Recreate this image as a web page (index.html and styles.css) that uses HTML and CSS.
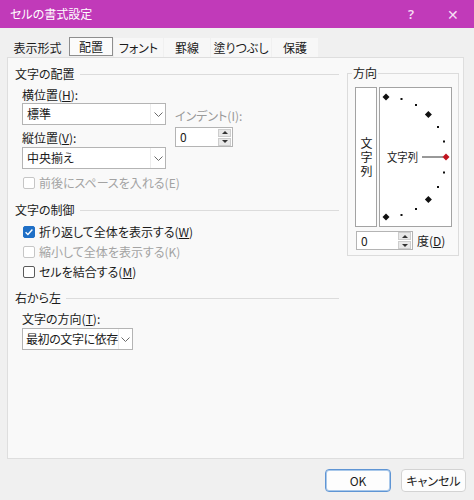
FILE: index.html
```html
<!DOCTYPE html>
<html lang="ja">
<head>
<meta charset="utf-8">
<title>セルの書式設定</title>
<link rel="stylesheet" href="styles.css">
</head>
<body>
<div class="window">
  <div class="titlebar">
    <span class="title">セルの書式設定</span>
    <span class="tb-btn">?</span>
    <span class="tb-btn tb-close">✕</span>
  </div>

  <div class="tabs">
    <div class="tab tab-plain">表示形式</div>
    <div class="tab tab-active">配置</div>
    <div class="tab">フォント</div>
    <div class="tab">罫線</div>
    <div class="tab">塗りつぶし</div>
    <div class="tab">保護</div>
  </div>

  <div class="panel">
    <div class="left">
      <div class="group-title"><span>文字の配置</span><i class="rule"></i></div>
      <div class="form form-align">
        <div class="col-a">
          <div class="label">横位置(<u>H</u>):</div>
          <div class="combo combo-wide">
            <span class="combo-text">標準</span>
            <span class="combo-arrow"><svg width="9" height="5" viewBox="0 0 9 5"><polyline points="0.5,0.5 4.5,4.5 8.5,0.5" fill="none" stroke="#6a6a6a" stroke-width="1"/></svg></span>
          </div>
          <div class="label label-2">縦位置(<u>V</u>):</div>
          <div class="combo combo-wide">
            <span class="combo-text">中央揃え</span>
            <span class="combo-arrow"><svg width="9" height="5" viewBox="0 0 9 5"><polyline points="0.5,0.5 4.5,4.5 8.5,0.5" fill="none" stroke="#6a6a6a" stroke-width="1"/></svg></span>
          </div>
        </div>
        <div class="col-b">
          <div class="label label-disabled">インデント(I):</div>
          <div class="spin spin-indent">
            <span class="spin-text">0</span>
            <span class="spin-btns">
              <span class="spin-up"><i class="tri-up"></i></span>
              <span class="spin-down"><i class="tri-down"></i></span>
            </span>
          </div>
        </div>
      </div>
      <div class="form">
        <div class="check-row check-first disabled"><span class="cb cb-disabled"></span><span>前後にスペースを入れる(E)</span></div>
      </div>

      <div class="group-title group-2"><span>文字の制御</span><i class="rule"></i></div>
      <div class="form form-checks">
        <div class="check-row"><span class="cb cb-checked"><svg width="12" height="12" viewBox="0 0 12 12"><polyline points="2.6,6.2 4.9,8.4 9.4,3.6" fill="none" stroke="#fff" stroke-width="1.4"/></svg></span><span>折り返して全体を表示する(<u>W</u>)</span></div>
        <div class="check-row disabled"><span class="cb cb-disabled"></span><span>縮小して全体を表示する(K)</span></div>
        <div class="check-row"><span class="cb"></span><span>セルを結合する(<u>M</u>)</span></div>
      </div>

      <div class="group-title group-3"><span>右から左</span><i class="rule"></i></div>
      <div class="form">
        <div class="label label-dir">文字の方向(<u>T</u>):</div>
        <div class="combo combo-narrow">
          <span class="combo-text combo-text-tight">最初の文字に依存</span>
          <span class="combo-arrow"><svg width="9" height="5" viewBox="0 0 9 5"><polyline points="0.5,0.5 4.5,4.5 8.5,0.5" fill="none" stroke="#6a6a6a" stroke-width="1"/></svg></span>
        </div>
      </div>
    </div>

    <div class="right">
      <div class="dir-group">
        <div class="dir-label">方向</div>
        <div class="dir-boxes">
          <div class="vbox"><span class="vtext">文字列</span></div>
          <div class="dial">
            <svg width="71" height="138" viewBox="0 0 71 138">
              <line x1="42" y1="69" x2="63" y2="69" stroke="#333" stroke-width="1"/>
              <text x="7" y="73.5" font-size="12" textLength="31" lengthAdjust="spacingAndGlyphs" fill="#1b1b1b">文字列</text>
              <polygon points="6,5.5 9.5,9 6,12.5 2.5,9" fill="#111"/>
              <rect x="20.5" y="10" width="2" height="2" fill="#111"/>
              <rect x="35" y="16" width="2" height="2" fill="#111"/>
              <polygon points="48.4,23.1 51.9,26.6 48.4,30.1 44.9,26.6" fill="#111"/>
              <rect x="57" y="38" width="2" height="2" fill="#111"/>
              <rect x="63" y="52.5" width="2" height="2" fill="#111"/>
              <polygon points="66,65.5 69.5,69 66,72.5 62.5,69" fill="#c0141e"/>
              <rect x="63" y="83.5" width="2" height="2" fill="#111"/>
              <rect x="57" y="98" width="2" height="2" fill="#111"/>
              <polygon points="48.4,107.9 51.9,111.4 48.4,114.9 44.9,111.4" fill="#111"/>
              <rect x="35" y="120" width="2" height="2" fill="#111"/>
              <rect x="20.5" y="126" width="2" height="2" fill="#111"/>
              <polygon points="6,125.5 9.5,129 6,132.5 2.5,129" fill="#111"/>
            </svg>
          </div>
        </div>
        <div class="deg-row">
          <div class="spin spin-deg">
            <span class="spin-text">0</span>
            <span class="spin-btns">
              <span class="spin-up"><i class="tri-up"></i></span>
              <span class="spin-down"><i class="tri-down"></i></span>
            </span>
          </div>
          <span class="deg-label">度(<u>D</u>)</span>
        </div>
      </div>
    </div>
  </div>

  <div class="buttons">
    <div class="btn btn-default">OK</div>
    <div class="btn btn-cancel">キャンセル</div>
  </div>
</div>
</body>
</html>
```

FILE: styles.css
```css
* { box-sizing: border-box; }
html, body { margin: 0; padding: 0; }
body {
  width: 474px;
  height: 500px;
  overflow: hidden;
  background: #f0f0f0;
  font-family: "Noto Sans CJK JP", "Noto Sans", sans-serif;
  font-size: 12px;
  color: #1b1b1b;
  font-feature-settings: "palt";
  text-autospace: no-autospace;
  white-space: nowrap;
}
u { text-decoration: underline; text-underline-offset: 1px; }

.window { width: 474px; height: 500px; }

/* title bar */
.titlebar {
  height: 28px;
  background: #c13ab9;
  color: #fff;
  display: flex;
  align-items: center;
  padding-left: 10px;
}
.title { flex: 1; font-size: 12px; line-height: 14px; }
.tb-btn {
  width: 42px;
  text-align: center;
  color: #f6dcf4;
  font-size: 13px;
  font-family: "Noto Sans", sans-serif;
  font-weight: 600;
}
.tb-close { font-weight: 400; font-size: 14px; }

/* tabs */
.tabs {
  margin-top: 9px;
  padding-left: 7px;
  height: 20px;
  display: grid;
  grid-template-columns: 61px 44px 49px 46px 60px 46px;
  column-gap: 1px;
  align-items: end;
}
.tab {
  background: #f7f7f7;
  height: 19px;
  display: flex;
  align-items: center;
  justify-content: center;
  line-height: 14px;
}
.tab-plain { background: transparent; }
.tab-active {
  background: #fbfbfb;
  border: 1px solid #8e8e8e;
  height: 19px;
  align-self: start;
}

/* panel */
.panel {
  margin-left: 7px;
  width: 457px;
  height: 402px;
  background: #f9f9f9;
  border: 1px solid #dedede;
  padding: 9px 4px 0 7px;
  display: flex;
  gap: 8px;
}
.left { width: 324px; }
.right { width: 112px; }

.group-title {
  display: flex;
  align-items: center;
  gap: 5px;
  line-height: 14px;
  height: 14px;
}
.rule { flex: 1; height: 1px; background: #dcdcdc; }
.group-2 { margin-top: 10px; }
.group-3 { margin-top: 9px; }

.form { padding-left: 7px; }
.form-align { display: flex; gap: 9px; margin-top: 6px; }
.col-a { width: 144px; }
.col-b { margin-top: 22px; }

.label { line-height: 15px; height: 15px; margin-bottom: 1px; }
.label-2 { margin-top: 5px; margin-bottom: 2px; }
.label-disabled { color: #9a9a9a; line-height: 14px; height: 14px; margin-bottom: 4px; }
.label-dir { margin-top: 7px; line-height: 14px; height: 14px; margin-bottom: 2px; }

.combo {
  height: 22px;
  background: #fff;
  border: 1px solid #b4b4b4;
  display: flex;
  align-items: center;
}
.combo-wide { width: 144px; }
.combo-narrow { width: 111px; }
.combo-text { flex: 1; padding-left: 4px; line-height: 16px; }
.combo-text-tight { letter-spacing: -0.4px; padding-left: 3px; }
.combo-arrow {
  width: 15px;
  height: 20px;
  flex: none;
  border-left: 1px solid #ececec;
  display: flex;
  align-items: center;
  justify-content: center;
}
.combo-arrow svg { display: block; }

.spin {
  background: #fff;
  border: 1px solid #b4b4b4;
  display: flex;
  align-items: center;
  padding-right: 1px;
}
.spin-indent { width: 58px; height: 20px; }
.spin-deg { width: 57px; height: 19px; }
.spin-text { flex: 1; padding-left: 4px; line-height: 14px; }
.spin-btns { width: 13px; display: flex; flex-direction: column; gap: 1px; }
.spin-up, .spin-down {
  height: 8px;
  background: #e8e8e8;
  border: 1px solid #cdcdcd;
  display: flex;
  align-items: center;
  justify-content: center;
}
.tri-up, .tri-down { width: 0; height: 0; border-left: 3px solid transparent; border-right: 3px solid transparent; }
.tri-up { border-bottom: 3px solid #333; }
.tri-down { border-top: 3px solid #333; }

/* checkboxes */
.check-row {
  display: flex;
  align-items: center;
  gap: 4px;
  height: 20px;
  line-height: 14px;
  padding-left: 1px;
}
.check-first { margin-top: 4px; }
.form-checks { margin-top: 5px; }
.disabled { color: #a3a3a3; }
.cb {
  width: 12px;
  height: 12px;
  border: 1px solid #5a5a5a;
  border-radius: 2px;
  background: #fff;
  flex: none;
  display: flex;
}
.cb-disabled { border-color: #c6c6c6; }
.cb-checked { background: #1f6fc6; border-color: #1f6fc6; }
.cb-checked svg { display: block; margin: -1px; }

/* direction group */
.dir-group {
  margin-top: 6px;
  border: 1px solid #dcdcdc;
  padding: 0 6px 5px 7px;
}
.dir-label {
  width: fit-content;
  margin: -8px 0 0 -3px;
  padding: 0 1px;
  background: #f9f9f9;
  line-height: 14px;
  height: 14px;
}
.dir-boxes { display: flex; gap: 2px; margin-top: 7px; height: 140px; }
.vbox {
  width: 22px;
  background: #fff;
  border: 1px solid #a3a3a3;
  display: flex;
  align-items: center;
  justify-content: center;
}
.vtext {
  writing-mode: vertical-rl;
  text-orientation: upright;
  letter-spacing: 2px;
  line-height: 14px;
  margin-top: 2px;
}
.dial {
  width: 73px;
  background: #fff;
  border: 1px solid #a3a3a3;
}
.dial svg { display: block; font-family: "Noto Sans CJK JP", sans-serif; }
.deg-row { display: flex; align-items: center; gap: 4px; margin-top: 4px; padding-left: 1px; }
.deg-label { line-height: 14px; }

/* buttons */
.buttons {
  margin-top: 10px;
  display: flex;
  justify-content: flex-end;
  gap: 10px;
  padding-right: 8px;
}
.btn {
  height: 23px;
  border-radius: 4px;
  background: #fdfdfd;
  display: flex;
  align-items: center;
  justify-content: center;
  line-height: 14px;
}
.btn-default { width: 66px; border: 1px solid #5f95d4; box-shadow: inset 0 0 0 1px #a9c8ea; }
.btn-cancel { width: 65px; border: 1px solid #d3d3d3; }
```
